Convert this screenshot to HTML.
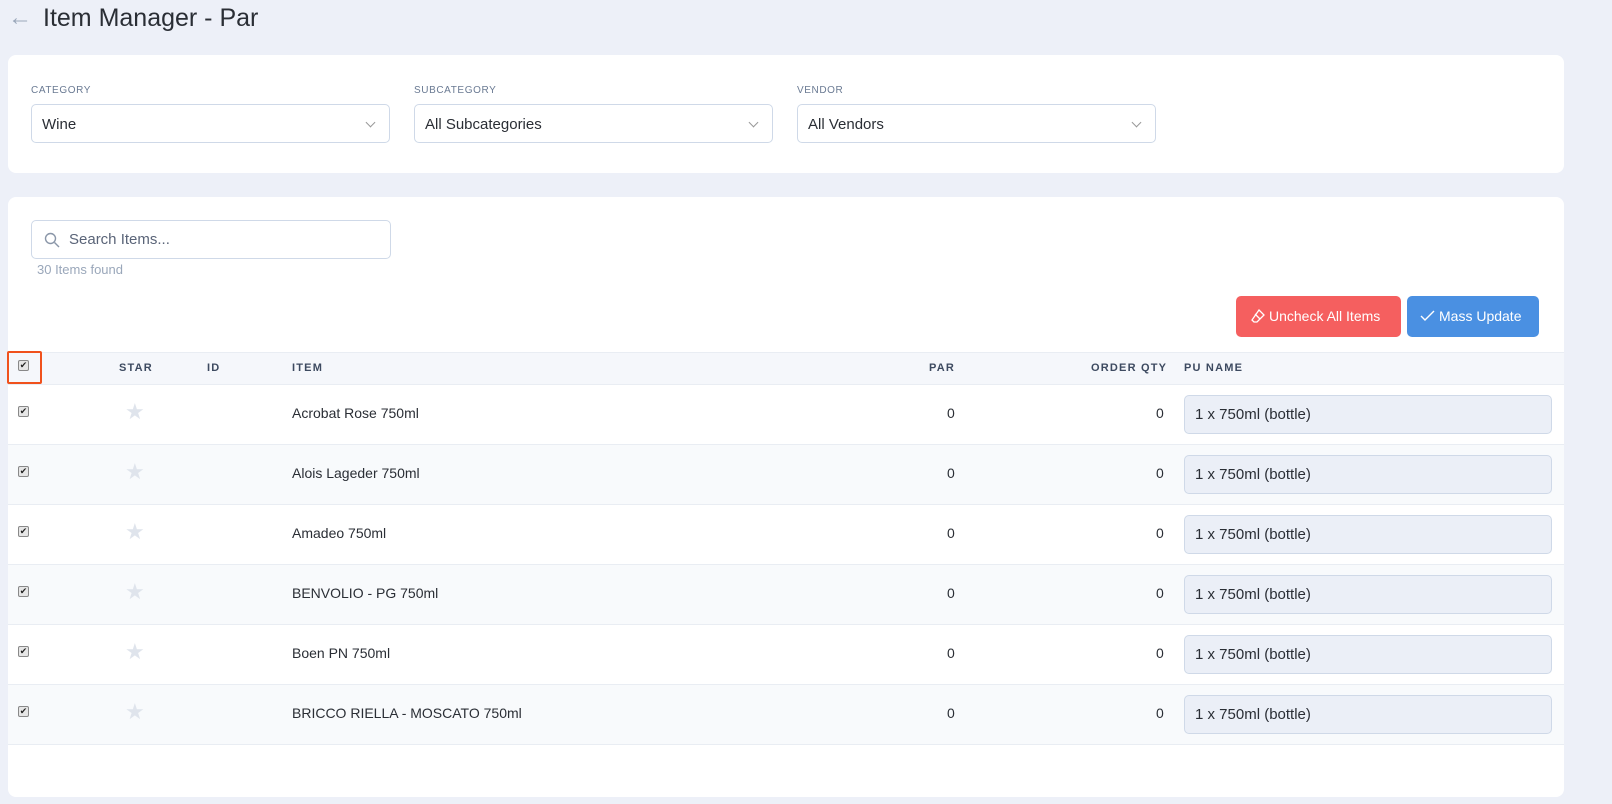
<!DOCTYPE html><html><head><style>
*{box-sizing:border-box}body{margin:0;width:1612px;height:767px;overflow:hidden;background:#edf0f8;font-family:"Liberation Sans",sans-serif;color:#2a2e35;position:relative}
.a{position:absolute}
.card{position:absolute;background:#fff;border-radius:8px;left:8px;width:1556px}
.lbl{font-size:10px;letter-spacing:.6px;color:#6a7a93;position:absolute;top:85px}
.sel{position:absolute;top:104px;height:39px;width:359px;border:1px solid #cfd9e8;border-radius:5px;font-size:15px;padding:11px 10px}
.sel:after{content:"";position:absolute;right:15px;top:14px;width:6px;height:6px;border-right:1px solid #999;border-bottom:1px solid #999;transform:rotate(45deg)}
.th{position:absolute;top:362px;font-size:11px;font-weight:bold;letter-spacing:1.2px;color:#3d4a60}
.row{position:absolute;left:8px;width:1556px;height:60px;border-top:1px solid #e9edf3}
.cb{position:absolute;left:10px;width:11px;height:11px;border:1px solid #888;border-radius:2px;background:#e6e6e6;font-size:9px;line-height:9px;text-align:center;color:#222}
.row .t{position:absolute;top:20px;font-size:14px}
.pu{position:absolute;left:1176px;top:10px;width:368px;height:39px;background:#ebeff7;border:1px solid #cfd9e8;border-radius:5px;font-size:15px;padding:10px 10px}
.star{position:absolute;left:117px;top:14px;color:#dfe4ec;font-size:22px}
</style></head><body>
<div class="a" style="left:8px;top:4px;font-size:24px;color:#9aa7ba">&#8592;</div>
<div class="a" style="left:43px;top:4px;font-size:25px;color:#2a2e35">Item Manager - Par</div>
<div class="card" style="top:55px;height:118px"></div>
<div class="lbl" style="left:31px">CATEGORY</div><div class="lbl" style="left:414px">SUBCATEGORY</div><div class="lbl" style="left:797px">VENDOR</div>
<div class="sel" style="left:31px">Wine</div><div class="sel" style="left:414px">All Subcategories</div><div class="sel" style="left:797px">All Vendors</div>
<div class="card" style="top:197px;height:600px"></div>
<div class="a" style="left:31px;top:220px;width:360px;height:39px;border:1px solid #cfd9e8;border-radius:5px;font-size:15px;color:#5a6478;padding:10px 0 0 37px">Search Items...
<svg class="a" style="left:12px;top:11px" width="16" height="16" viewBox="0 0 16 16" fill="none" stroke="#8a96a8" stroke-width="1.4"><circle cx="6.5" cy="6.5" r="5"/><path d="M10.5 10.5L15 15"/></svg></div>
<div class="a" style="left:37px;top:262px;font-size:13px;color:#9aa7ba">30 Items found</div>
<div class="a" style="left:1236px;top:296px;width:165px;height:41px;background:#f55f5f;border-radius:5px;color:#fff;font-size:14px;padding:12px 0 0 33px">Uncheck All Items
<svg class="a" style="left:14px;top:12px" width="16" height="16" viewBox="0 0 16 16" fill="none" stroke="#fff" stroke-width="1.3"><path d="M9 2l5 5-7 7H4L2 12z M5 6l5 5"/></svg></div>
<div class="a" style="left:1407px;top:296px;width:132px;height:41px;background:#4a90e2;border-radius:5px;color:#fff;font-size:14px;padding:12px 0 0 32px">Mass Update
<svg class="a" style="left:13px;top:13px" width="15" height="14" viewBox="0 0 15 14" fill="none" stroke="#fff" stroke-width="1.4"><path d="M1 7l4 4 9-9"/></svg></div>
<div class="a" style="left:8px;top:352px;width:1556px;height:32px;background:#f5f7fb;border-top:1px solid #e9edf3"></div>
<div class="cb a" style="left:18px;top:360px">&#10004;</div>
<div class="a" style="left:7px;top:351px;width:35px;height:33px;border:2px solid #f0511c;border-radius:2px"></div>
<div class="th" style="left:119px">STAR</div><div class="th" style="left:207px">ID</div><div class="th" style="left:292px">ITEM</div><div class="th" style="left:929px">PAR</div><div class="th" style="left:1091px">ORDER QTY</div><div class="th" style="left:1184px">PU NAME</div>
<div class="row" style="top:384px"><div class="cb" style="top:21px">&#10004;</div><div class="star">&#9733;</div><div class="t" style="left:284px">Acrobat Rose 750ml</div><div class="t" style="left:939px">0</div><div class="t" style="left:1148px">0</div><div class="pu">1 x 750ml (bottle)</div></div>
<div class="row" style="top:444px;background:#f8fafc"><div class="cb" style="top:21px">&#10004;</div><div class="star">&#9733;</div><div class="t" style="left:284px">Alois Lageder 750ml</div><div class="t" style="left:939px">0</div><div class="t" style="left:1148px">0</div><div class="pu">1 x 750ml (bottle)</div></div>
<div class="row" style="top:504px"><div class="cb" style="top:21px">&#10004;</div><div class="star">&#9733;</div><div class="t" style="left:284px">Amadeo 750ml</div><div class="t" style="left:939px">0</div><div class="t" style="left:1148px">0</div><div class="pu">1 x 750ml (bottle)</div></div>
<div class="row" style="top:564px;background:#f8fafc"><div class="cb" style="top:21px">&#10004;</div><div class="star">&#9733;</div><div class="t" style="left:284px">BENVOLIO - PG 750ml</div><div class="t" style="left:939px">0</div><div class="t" style="left:1148px">0</div><div class="pu">1 x 750ml (bottle)</div></div>
<div class="row" style="top:624px"><div class="cb" style="top:21px">&#10004;</div><div class="star">&#9733;</div><div class="t" style="left:284px">Boen PN 750ml</div><div class="t" style="left:939px">0</div><div class="t" style="left:1148px">0</div><div class="pu">1 x 750ml (bottle)</div></div>
<div class="row" style="top:684px;background:#f8fafc"><div class="cb" style="top:21px">&#10004;</div><div class="star">&#9733;</div><div class="t" style="left:284px">BRICCO RIELLA - MOSCATO 750ml</div><div class="t" style="left:939px">0</div><div class="t" style="left:1148px">0</div><div class="pu">1 x 750ml (bottle)</div></div>
<div class="row" style="top:744px"></div>
</body></html>
